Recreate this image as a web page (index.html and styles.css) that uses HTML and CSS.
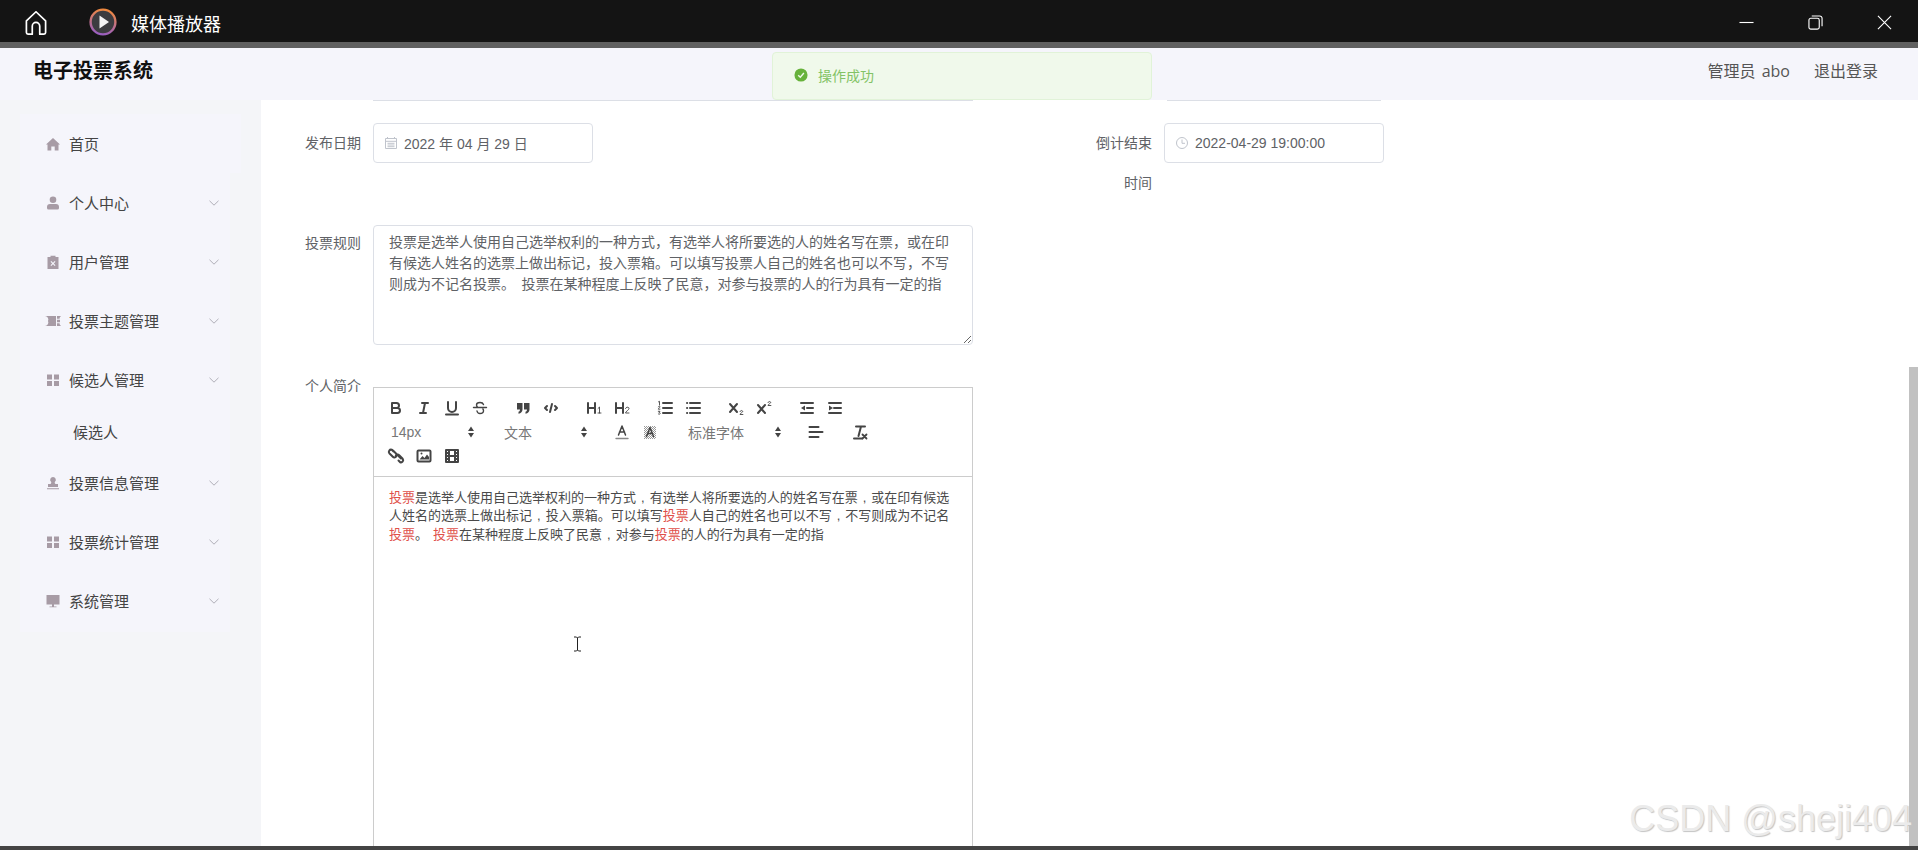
FILE: index.html
```html
<!DOCTYPE html>
<html lang="zh">
<head>
<meta charset="utf-8">
<title>电子投票系统</title>
<link rel="stylesheet" href="styles.css">
</head>
<body>
<div class="titlebar">
  <svg class="tb-home" viewBox="2 1.300 20 22.500"><path d="M3 21.500V10.500L12 2l9 8.500v11a1.500 1.500 0 0 1-1.500 1.500H15.500v-7.500a3.500 3.500 0 0 0-7 0V23H4.500A1.500 1.500 0 0 1 3 21.500z"/></svg>
  <svg class="tb-logo" viewBox="0 0 28 28"><defs><linearGradient id="ring" x1="0.7" y1="0" x2="0.5" y2="1"><stop offset="0" stop-color="#f28a3c"/><stop offset="1" stop-color="#9a5fc0"/></linearGradient></defs><circle cx="14" cy="14" r="12.400" fill="#3c3c40" stroke="url(#ring)" stroke-width="2.400"/><path d="M10.500 7.500 20 14l-9.500 6.500z" fill="#f4f4f4"/></svg>
  <span class="tb-title">媒体播放器</span>
  <div class="tb-controls">
    <svg class="tb-ctl" viewBox="0 0 16 16"><path d="M0.500 8h15"/></svg>
    <svg class="tb-ctl" viewBox="0 0 16 16"><rect x="1" y="3.500" width="11" height="11.500" rx="2"/><path d="M4 1h8.500A2.500 2.500 0 0 1 15 3.500V12"/></svg>
    <svg class="tb-ctl" viewBox="0 0 16 16"><path d="M1 1l14 14M15 1L1 15"/></svg>
  </div>
</div>
<div class="titlebar-edge"></div>

<header class="header">
  <h1 class="brand">电子投票系统</h1>
  <div class="header-right">
    <span>管理员 abo</span>
    <span>退出登录</span>
  </div>
</header>

<div class="main">
  <aside class="sidebar">
    <nav class="nav">
      <a class="nav-item nav-home">
        <svg class="nav-icon" viewBox="0 0 14 14"><path d="M7 1 14 7.500h-1.500V13.500H8.700V9.500H5.300v4H1.500V7.500H0z"/></svg>
        <span class="nav-text">首页</span>
      </a>
      <a class="nav-item">
        <svg class="nav-icon" viewBox="0 0 14 14"><circle cx="7" cy="3.800" r="3.300"/><path d="M1 11a3 3 0 0 1 3-3h6a3 3 0 0 1 3 3v1a1.500 1.500 0 0 1-1.500 1.500h-9A1.500 1.500 0 0 1 1 12z"/></svg>
        <span class="nav-text">个人中心</span>
        <svg class="nav-arrow" viewBox="0 0 12 12"><path d="M1.500 3.800 6 8.200l4.500-4.400"/></svg>
      </a>
      <a class="nav-item">
        <svg class="nav-icon" viewBox="0 0 14 14"><path fill-rule="evenodd" d="M1.500 2H4.500V0.800h5V2h3v12h-11zM5.300 6 4.500 6.800 6.200 8.500 4.500 10.200 5.300 11 7 9.300 8.700 11 9.500 10.200 7.800 8.500 9.500 6.800 8.700 6 7 7.700z"/></svg>
        <span class="nav-text">用户管理</span>
        <svg class="nav-arrow" viewBox="0 0 12 12"><path d="M1.500 3.800 6 8.200l4.500-4.400"/></svg>
      </a>
      <a class="nav-item">
        <svg class="nav-icon nav-icon-wide" viewBox="0 0 16 14"><path d="M0 2h11v10H0a3.500 3.500 0 0 0 3-5A3.500 3.500 0 0 0 0 2zM12 2h4a3.500 3.500 0 0 0-1.500 2.800H12zM12 5.800h3v2.400h-3zM12 9.200h2.500A3.500 3.500 0 0 0 16 12h-4z"/></svg>
        <span class="nav-text">投票主题管理</span>
        <svg class="nav-arrow" viewBox="0 0 12 12"><path d="M1.500 3.800 6 8.200l4.500-4.400"/></svg>
      </a>
      <a class="nav-item">
        <svg class="nav-icon" viewBox="0 0 14 14"><path d="M1 1.500h5v5H1zM8 1.500h5v5H8zM1 8h5v5H1zM8 8h5v5H8z"/></svg>
        <span class="nav-text">候选人管理</span>
        <svg class="nav-arrow" viewBox="0 0 12 12"><path d="M1.500 3.800 6 8.200l4.500-4.400"/></svg>
      </a>
      <a class="nav-sub">候选人</a>
      <a class="nav-item">
        <svg class="nav-icon" viewBox="0 0 14 14"><path d="M7 1a2.800 2.800 0 0 1 2 4.800c-.5.700-.3 1.700.5 2.200H12v3H2V8h2.500c.8-.5 1-1.500.5-2.200A2.800 2.800 0 0 1 7 1zM1 12.200h12v1H1z"/></svg>
        <span class="nav-text">投票信息管理</span>
        <svg class="nav-arrow" viewBox="0 0 12 12"><path d="M1.500 3.800 6 8.200l4.500-4.400"/></svg>
      </a>
      <a class="nav-item">
        <svg class="nav-icon" viewBox="0 0 14 14"><path d="M1 1.500h5v5H1zM8 1.500h5v5H8zM1 8h5v5H1zM8 8h5v5H8z"/></svg>
        <span class="nav-text">投票统计管理</span>
        <svg class="nav-arrow" viewBox="0 0 12 12"><path d="M1.500 3.800 6 8.200l4.500-4.400"/></svg>
      </a>
      <a class="nav-item">
        <svg class="nav-icon" viewBox="0 0 14 14"><path d="M0.500 1h13v9.500h-13zM6 10.500h2v2h2.500v.8h-7v-.8H6z"/></svg>
        <span class="nav-text">系统管理</span>
        <svg class="nav-arrow" viewBox="0 0 12 12"><path d="M1.500 3.800 6 8.200l4.500-4.400"/></svg>
      </a>
    </nav>
  </aside>

  <main class="content">
    <div class="clipped-row">
      <div class="clipped clipped-left"></div>
      <div class="clipped clipped-right"></div>
    </div>

    <div class="form-row">
      <div class="form-item form-item-left">
        <label class="form-label">发布日期</label>
        <div class="input">
          <svg class="input-icon" viewBox="0 0 14 14"><path d="M1.500 2.500h11v10h-11zM1.500 5.300h11M3.500 1v2M10.500 1v2M3.500 7.300h7M3.500 9h7M3.500 10.700h7"/></svg>
          <span>2022 年 04 月 29 日</span>
        </div>
      </div>
      <div class="form-item">
        <label class="form-label">倒计结束时间</label>
        <div class="input">
          <svg class="input-icon" viewBox="0 0 14 14"><circle cx="7" cy="7" r="5.500"/><path d="M7 3.500V7.300h3"/></svg>
          <span>2022-04-29 19:00:00</span>
        </div>
      </div>
    </div>

    <div class="form-item form-block">
      <label class="form-label">投票规则</label>
      <textarea class="textarea" readonly>投票是选举人使用自己选举权利的一种方式，有选举人将所要选的人的姓名写在票，或在印有候选人姓名的选票上做出标记，投入票箱。可以填写投票人自己的姓名也可以不写，不写则成为不记名投票。 投票在某种程度上反映了民意，对参与投票的人的行为具有一定的指</textarea>
    </div>

    <div class="form-item form-block">
      <label class="form-label form-label-editor">个人简介</label>
      <div class="editor">
        <div class="toolbar">
          <span class="tool-group">
            <svg class="tool" viewBox="0 0 18 18"><path d="M5 4h4.500a2.500 2.500 0 0 1 0 5H5zM5 9h5.500a2.500 2.500 0 0 1 0 5H5z"/></svg>
            <svg class="tool" viewBox="0 0 18 18"><path d="M7 4h6M5 14h6M10 4 8 14"/></svg>
            <svg class="tool" viewBox="0 0 18 18"><path d="M5 3v6a4 4 0 0 0 8 0V3M3 15.500h12"/></svg>
            <svg class="tool tool-thin" viewBox="0 0 18 18"><path d="M2.500 8.500h13M12.500 5.500C12 4 10.500 3.500 9 3.500 7 3.500 5.500 4.500 5.500 6c0 1 .5 1.800 1.500 2.500M6 12c.3 1.700 1.500 2.500 3 2.500 2 0 3.500-1 3.500-2.700 0-.8-.2-1.300-.6-1.800"/></svg>
          </span>
          <span class="tool-group">
            <svg class="tool tool-fill" viewBox="0 0 18 18"><path d="M3 4h5.500v6.500C8.500 12.800 7 14.300 4.500 14.800v-2c1-.3 1.500-1 1.500-2.300H3zM10 4h5.500v6.500c0 2.300-1.500 3.800-4 4.300v-2c1-.3 1.500-1 1.500-2.300h-3z"/></svg>
            <svg class="tool" viewBox="0 0 18 18"><path d="M5 7 3 9l2 2M13 7l2 2-2 2M10 5 8 13"/></svg>
          </span>
          <span class="tool-group">
            <svg class="tool" viewBox="0 0 18 18"><path d="M3 4v10M10 4v10M3 9h7"/><path class="tool-hair" d="M13 9.500 14.500 8v6M13 14h3"/></svg>
            <svg class="tool" viewBox="0 0 18 18"><path d="M3 4v10M10 4v10M3 9h7"/><path class="tool-hair" d="M12.500 9.500c.4-1.800 3.500-1.800 3.500 0 0 1.500-3.500 3-3.500 4.500H16"/></svg>
          </span>
          <span class="tool-group">
            <svg class="tool" viewBox="0 0 18 18"><path d="M7 4h9M7 9h9M7 14h9"/><path class="tool-hair" d="M2.500 2.800 3.500 2.300V6M2.300 7.800c.3-.8 1.700-.8 1.700 0 0 .8-1.700 1.400-1.700 2.400H4M2.300 12.300h1.700l-1 1.200c1 0 1.200.5 1.200 1 0 .8-1.500 1-2 .3"/></svg>
            <svg class="tool" viewBox="0 0 18 18"><path d="M6 4h10M6 9h10M6 14h10M3 4h.2M3 9h.2M3 14h.2"/></svg>
          </span>
          <span class="tool-group">
            <svg class="tool" viewBox="0 0 18 18"><path d="M3 5l7 8M10 5l-7 8"/><path class="tool-hair" d="M13 12.500c.2-1.300 2.700-1.300 2.700 0 0 1-2.700 1.700-2.700 3h2.900"/></svg>
            <svg class="tool" viewBox="0 0 18 18"><path d="M3 6l7 8M10 6l-7 8"/><path class="tool-hair" d="M13 3.500c.2-1.300 2.700-1.300 2.700 0 0 1-2.700 1.700-2.700 3h2.900"/></svg>
          </span>
          <span class="tool-group">
            <svg class="tool" viewBox="0 0 18 18"><path d="M3 4h12M9 9h6M3 14h12"/><path class="tool-solid" d="M7 6.500v5L3 9z"/></svg>
            <svg class="tool" viewBox="0 0 18 18"><path d="M3 4h12M8 9h7M3 14h12"/><path class="tool-solid" d="M3 6.500v5L7 9z"/></svg>
          </span>
          <span class="picker picker-size">14px<svg class="picker-arrow" viewBox="0 0 8 14"><path d="M4 1.500 7 6H1zM4 12.500 1 8h6z"/></svg></span>
          <span class="picker picker-head">文本<svg class="picker-arrow" viewBox="0 0 8 14"><path d="M4 1.500 7 6H1zM4 12.500 1 8h6z"/></svg></span>
          <span class="tool-group">
            <svg class="tool" viewBox="0 0 18 18"><path class="tool-mid" d="M5.500 12 9 3l3.500 9M6.500 9h5"/><path class="tool-under" d="M3 15.500h12"/></svg>
            <svg class="tool" viewBox="0 0 18 18"><defs><pattern id="dots" width="2" height="2" patternUnits="userSpaceOnUse"><rect class="tool-dot" width="1" height="1"/><rect class="tool-dot" x="1" y="1" width="1" height="1"/></pattern></defs><rect class="tool-dots" x="3" y="3" width="12" height="13"/><path class="tool-mid" d="M5.500 13.500 9 4.500l3.500 9M6.500 10.500h5"/></svg>
          </span>
          <span class="picker picker-font">标准字体<svg class="picker-arrow" viewBox="0 0 8 14"><path d="M4 1.500 7 6H1zM4 12.500 1 8h6z"/></svg></span>
          <span class="tool-group">
            <svg class="tool" viewBox="0 0 18 18"><path d="M1.500 4h9M1.500 9h13M1.500 14h9"/></svg>
          </span>
          <span class="tool-group">
            <svg class="tool" viewBox="0 0 18 18"><path d="M5 3.500h9M10 3.500 7.500 13M3 15.500h8"/><path class="tool-heavy" d="M11.500 11.500l4 4M15.500 11.500l-4 4"/></svg>
          </span>
          <span class="tool-group">
            <svg class="tool" viewBox="0 0 18 18"><path d="M6.500 4.500 4.800 2.800a2.200 2.200 0 0 0-2.500 3.400l3.500 3.500a2.200 2.200 0 0 0 3.400-.2M11.500 13.500l1.700 1.700a2.200 2.200 0 0 0 2.500-3.400l-3.500-3.500a2.200 2.200 0 0 0-3.400.2M6 3.500l8 8"/></svg>
            <svg class="tool" viewBox="0 0 18 18"><rect x="2.500" y="3.500" width="13" height="11" rx="1"/><path class="tool-solid" d="M4.500 12.500 7.500 9l2 2 2.500-3.500 2 2.500v2.500z"/><circle class="tool-solid" cx="6.500" cy="6.500" r="1"/></svg>
            <svg class="tool" viewBox="0 0 18 18"><rect x="3" y="3" width="12" height="12"/><path d="M6 3v12M12 3v12M6 9h6M3 6h3M3 9h3M3 12h3M12 6h3M12 9h3M12 12h3"/></svg>
          </span>
        </div>
        <div class="editor-body"><span class="mark">投票</span>是选举人使用自己选举权利的一种方式 , 有选举人将所要选的人的姓名写在票 , 或在印有候选人姓名的选票上做出标记 , 投入票箱。可以填写<span class="mark">投票</span>人自己的姓名也可以不写 , 不写则成为不记名<span class="mark">投票</span>。 <span class="mark">投票</span>在某种程度上反映了民意 , 对参与<span class="mark">投票</span>的人的行为具有一定的指</div>
      </div>
    </div>
  </main>

  <div class="scrollbar"><div class="scrollbar-thumb"></div></div>
</div>

<div class="bottom-edge"></div>

<div class="toast">
  <svg class="toast-icon" viewBox="0 0 16 16"><circle cx="8" cy="8" r="7.500"/><path d="M4.800 8.200 7.200 10.500 11.300 5.800"/></svg>
  <span>操作成功</span>
</div>
<svg class="ibeam" viewBox="0 0 9 16"><path d="M1 1h2.500l1 1 1-1H8M4.500 2v12M1 15h2.500l1-1 1 1H8"/></svg>
<div class="watermark">CSDN @sheji404</div>
</body>
</html>
```

FILE: styles.css
```css
* { box-sizing: border-box; }
html, body { margin: 0; height: 850px; overflow: hidden; }
body {
  display: flex;
  flex-direction: column;
  font-family: "Liberation Sans", "Noto Sans CJK SC", sans-serif;
  font-size: 14px;
  color: #606266;
  background: #fff;
}

/* title bar */
.titlebar {
  height: 42px;
  flex: none;
  display: flex;
  align-items: center;
  background: #141414;
  color: #fff;
  padding-left: 25px;
}
.tb-home { width: 22px; height: 24px; margin-top: 3px; fill: none; stroke: #fff; stroke-width: 1.600; stroke-linejoin: round; }
.tb-logo { width: 28px; height: 28px; margin: 2px 0 0 42px; }
.tb-title { font-size: 18px; margin: 3px 0 0 14px; }
.tb-controls { margin-left: auto; display: flex; gap: 54px; padding: 3px 26px 0 0; }
.tb-ctl { width: 15px; height: 15px; fill: none; stroke: #fff; stroke-width: 1.200; }
.titlebar-edge { height: 6px; flex: none; background: #606060; }

/* header */
.header {
  height: 52px;
  flex: none;
  display: flex;
  align-items: center;
  justify-content: space-between;
  background: #f5f5fb;
  padding: 0 40px 9px 33px;
}
.brand { margin: 0; font-size: 20px; font-weight: 700; color: #111; }
.header-right { display: flex; gap: 24px; font-family: "Open Sans", "Noto Sans CJK SC", sans-serif; font-size: 16px; word-spacing: 2px; color: #555; }

/* layout */
.main { flex: 1; min-height: 0; display: flex; }
.sidebar { width: 261px; flex: none; background: #f4f5f8; padding: 14px 0 0 20px; }
.nav { width: 210px; padding-bottom: 2px; background: #f5f5fb; }
.nav-item {
  height: 59px;
  display: flex;
  align-items: center;
  padding-left: 26px;
  font-size: 15px;
  color: #444;
}
.nav-home { width: 221px; background: #f5f5fb; }
.nav-icon { width: 14px; height: 14px; flex: none; fill: #a79ba5; }
.nav-icon-wide { width: 16px; margin-left: -1px; margin-right: -1px; }
.nav-text { margin-left: 9px; flex: 1; }
.nav-arrow { width: 12px; height: 12px; flex: none; margin-right: 10px; fill: none; stroke: #b0afb8; stroke-width: 1; }
.nav-sub { height: 44px; display: flex; align-items: center; padding-left: 53px; font-size: 15px; color: #444; }

/* content */
.content { flex: 1; min-width: 0; padding-left: 32px; overflow: hidden; }
.clipped-row { height: 1px; display: flex; margin-bottom: 22px; }
.clipped { height: 1px; background: #dcdfe6; }
.clipped-left { width: 600px; margin-left: 80px; }
.clipped-right { width: 214px; margin-left: 194px; }
.form-row { display: flex; margin-bottom: 22px; }
.form-item { display: flex; align-items: flex-start; }
.form-item-left { width: 791px; }
.form-block { margin-bottom: 22px; }
.form-label {
  width: 80px;
  flex: none;
  padding-right: 12px;
  text-align: right;
  line-height: 40px;
  color: #606266;
}
.form-block .form-label { line-height: 36px; }
.form-block .form-label-editor { line-height: 38px; }
.input {
  width: 220px;
  height: 40px;
  border: 1px solid #dcdfe6;
  border-radius: 4px;
  display: flex;
  align-items: center;
  padding-left: 10px;
  color: #606266;
}
.input-icon { width: 14px; height: 14px; flex: none; margin-right: 6px; fill: none; stroke: #c0c4cc; stroke-width: 1; }
.textarea {
  display: block;
  width: 600px;
  height: 120px;
  padding: 6px 15px;
  border: 1px solid #dcdfe6;
  border-radius: 4px;
  font: inherit;
  line-height: 21px;
  word-spacing: 2.500px;
  color: #606266;
  outline: none;
  background: #fff;
}

/* editor */
.editor { width: 600px; height: 500px; margin-top: 20px; border: 1px solid #ccc; }
.toolbar {
  height: 89px;
  padding: 8px;
  border-bottom: 1px solid #ccc;
  display: flex;
  flex-wrap: wrap;
  align-content: flex-start;
  color: #444;
}
.tool-group { display: flex; margin-right: 15px; height: 24px; }
.tool { width: 28px; height: 24px; padding: 3px 5px; fill: none; stroke: #444; stroke-width: 2; stroke-linecap: round; stroke-linejoin: round; }
.tool-thin { stroke-width: 1.400; }
.tool-fill { fill: #444; stroke: none; }
.tool-hair { stroke-width: 0.900; }
.tool-solid { fill: #444; stroke: none; }
.tool-mid { stroke-width: 1.500; }
.tool-under { stroke: #888; stroke-width: 1.400; }
.tool-heavy { stroke-width: 1.800; }
.tool-dot { fill: #999; stroke: none; }
.tool-dots { fill: url(#dots); stroke: none; }
.picker {
  height: 24px;
  display: flex;
  align-items: center;
  justify-content: space-between;
  margin-right: 15px;
  padding: 0 5px 0 9px;
  font-size: 14px;
  color: #777;
}
.picker-size { width: 98px; }
.picker-head { width: 98px; }
.picker-font { width: 109px; padding-right: 6px; }
.picker-arrow { width: 8px; height: 14px; fill: #444; }
.editor-body { padding: 12px 15px; font-size: 13px; line-height: 18.460px; word-spacing: 1.400px; color: #4a4a4a; }
.mark { color: #e0504a; }

/* scrollbar */
.scrollbar { width: 9px; flex: none; padding-top: 267px; }
.scrollbar-thumb { height: 100%; background: #c1c1c1; }
.bottom-edge { height: 4px; flex: none; background: #444; }

/* overlays */
.toast {
  position: absolute;
  left: 772px;
  top: 52px;
  width: 380px;
  height: 48px;
  display: flex;
  align-items: center;
  gap: 10px;
  padding: 0 0 2px 21px;
  background: #f0f9eb;
  border: 1px solid #e1f3d8;
  border-radius: 4px;
  color: #83c366;
  font-size: 14px;
}
.toast-icon { width: 14px; height: 14px; fill: #67b23b; stroke: none; }
.toast-icon path { fill: none; stroke: #f0f9eb; stroke-width: 1.600; }
.ibeam { position: absolute; left: 573px; top: 636px; width: 9px; height: 16px; fill: none; stroke: #222; stroke-width: 1; }
.watermark {
  position: absolute;
  right: 6px;
  top: 799px;
  font-size: 36px;
  line-height: 40px;
  white-space: nowrap;
  color: #ebebeb;
  text-shadow: 1px 1px 1px #c4c4c4;
}
```
